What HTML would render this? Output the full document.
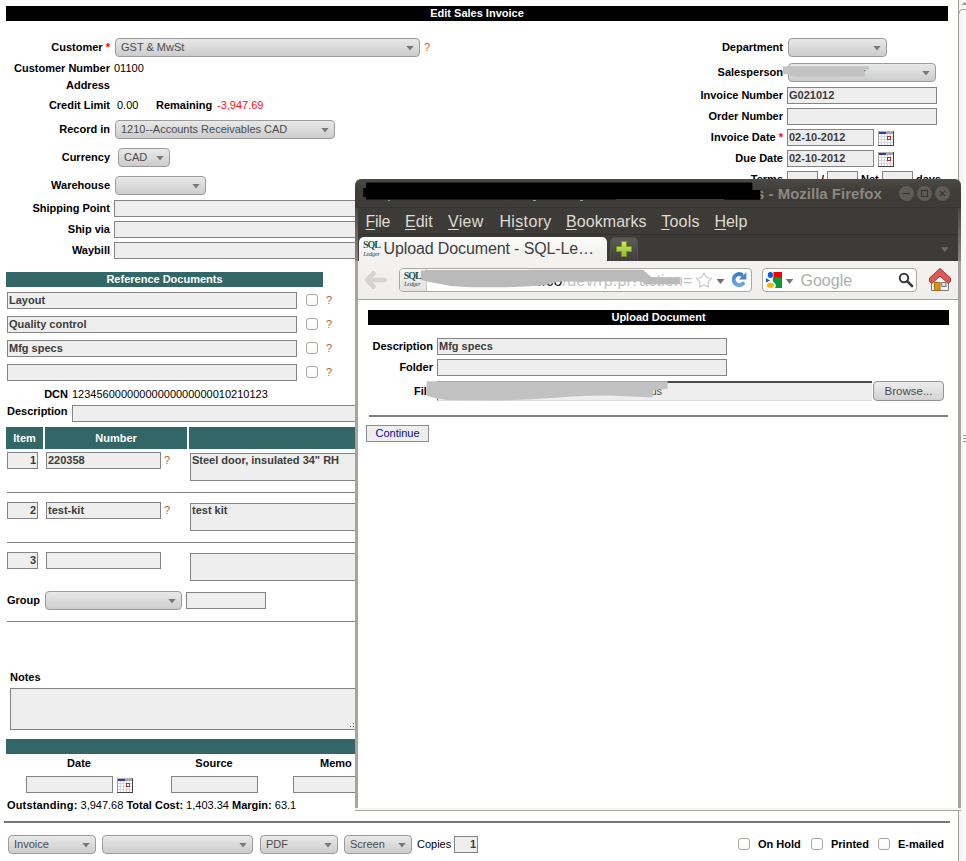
<!DOCTYPE html>
<html><head><meta charset="utf-8"><title>Edit Sales Invoice</title>
<style>
html,body{margin:0;padding:0;background:#fff;}
body{width:966px;height:861px;position:relative;overflow:hidden;font-family:"Liberation Sans",sans-serif;font-size:11px;color:#000;}
.a{position:absolute;box-sizing:content-box;}
.t{position:absolute;white-space:nowrap;font-size:11px;line-height:13px;}
.band{color:#fff;font-weight:bold;text-align:center;font-size:11px;white-space:nowrap;overflow:hidden;}
.in{position:absolute;background:#eee;border:1px solid #848484;font-weight:bold;font-size:11px;line-height:15px;color:#3c3c3c;padding:0 1px 0 1px;white-space:nowrap;overflow:hidden;box-sizing:content-box;}
.sel{position:absolute;border:1px solid #9b9b9b;border-radius:4px;background:linear-gradient(#e9e9e9,#cccccc);font-size:11px;color:#4c4c4c;text-indent:5px;white-space:nowrap;overflow:hidden;box-sizing:content-box;}
.sel i{position:absolute;right:5px;top:50%;margin-top:-2px;width:8px;height:5px;background:#787878;clip-path:polygon(0 0,100% 0,50% 100%);}
.chk{position:absolute;width:10px;height:10px;border:1px solid #a9a59e;border-radius:3px;background:linear-gradient(#fff,#fafafa);box-sizing:content-box;}

u{text-underline-offset:2px;text-decoration-thickness:1px;}
</style></head><body>
<div class="a band" style="left:6px;top:6px;width:942px;height:15px;line-height:15px;background:#000">Edit Sales Invoice</div>
<div class="t" style="right:856px;top:41px;font-weight:bold;">Customer <span style="color:#f00">*</span></div>
<div class="sel" style="left:115px;top:38px;width:303px;height:17px;line-height:17px">GST &amp; MwSt<i></i></div>
<div class="t" style="left:424px;top:41px;color:#b5633a;">?</div>
<div class="t" style="right:856px;top:62px;font-weight:bold;">Customer Number</div>
<div class="t" style="left:114px;top:62px;">01100</div>
<div class="t" style="right:856px;top:79px;font-weight:bold;">Address</div>
<div class="t" style="right:856px;top:99px;font-weight:bold;">Credit Limit</div>
<div class="t" style="left:117px;top:99px;">0.00</div>
<div class="t" style="left:156px;top:99px;font-weight:bold;">Remaining</div>
<div class="t" style="left:217px;top:99px;color:#ff1010;">-3,947.69</div>
<div class="t" style="right:856px;top:123px;font-weight:bold;">Record in</div>
<div class="sel" style="left:115px;top:120px;width:218px;height:17px;line-height:17px">1210--Accounts Receivables CAD<i></i></div>
<div class="t" style="right:856px;top:151px;font-weight:bold;">Currency</div>
<div class="sel" style="left:118px;top:148px;width:50px;height:17px;line-height:17px">CAD<i></i></div>
<div class="t" style="right:856px;top:179px;font-weight:bold;">Warehouse</div>
<div class="sel" style="left:115px;top:176px;width:89px;height:17px;line-height:17px"><i></i></div>
<div class="t" style="right:856px;top:202px;font-weight:bold;">Shipping Point</div>
<div class="in" style="left:114px;top:200px;width:296px;height:15px;"></div>
<div class="t" style="right:856px;top:223px;font-weight:bold;">Ship via</div>
<div class="in" style="left:114px;top:221px;width:296px;height:15px;"></div>
<div class="t" style="right:856px;top:244px;font-weight:bold;">Waybill</div>
<div class="in" style="left:114px;top:242px;width:296px;height:15px;"></div>
<div class="t" style="right:183px;top:41px;font-weight:bold;">Department</div>
<div class="sel" style="left:788px;top:38px;width:97px;height:17px;line-height:17px"><i></i></div>
<div class="t" style="right:183px;top:66px;font-weight:bold;">Salesperson</div>
<div class="sel" style="left:788px;top:63px;width:146px;height:17px;line-height:17px"><i></i></div>
<div class="t" style="left:862.3px;top:66px;color:#667;">r</div>
<svg class="a" style="left:780px;top:62px" width="92" height="18" viewBox="780 62 92 18"><path d="M783 66.2H869V69.6H864V76.4L797 76.9L790 76.2V74.2H783z" fill="#c3c3c3"/></svg>
<div class="t" style="right:183px;top:89px;font-weight:bold;">Invoice Number</div>
<div class="in" style="left:787px;top:87px;width:146px;height:15px;">G021012</div>
<div class="t" style="right:183px;top:110px;font-weight:bold;">Order Number</div>
<div class="in" style="left:787px;top:108px;width:146px;height:15px;"></div>
<div class="t" style="right:183px;top:131px;font-weight:bold;">Invoice Date <span style="color:#f00">*</span></div>
<div class="in" style="left:787px;top:129px;width:83px;height:15px;">02-10-2012</div>
<svg class="a" style="left:878px;top:131px" width="16" height="15" viewBox="0 0 16 15"><rect x="0" y="0" width="16" height="15" fill="#d6d6de"/><g fill="#fff"><rect x="1" y="3" width="2" height="2"/><rect x="1" y="6" width="2" height="2"/><rect x="1" y="9" width="2" height="2"/><rect x="1" y="12" width="2" height="2"/><rect x="4" y="3" width="2" height="2"/><rect x="4" y="6" width="2" height="2"/><rect x="4" y="9" width="2" height="2"/><rect x="4" y="12" width="2" height="2"/><rect x="7" y="3" width="2" height="2"/><rect x="7" y="6" width="2" height="2"/><rect x="7" y="9" width="2" height="2"/><rect x="7" y="12" width="2" height="2"/><rect x="10" y="3" width="2" height="2"/><rect x="10" y="6" width="2" height="2"/><rect x="10" y="9" width="2" height="2"/><rect x="10" y="12" width="2" height="2"/><rect x="13" y="3" width="2" height="2"/><rect x="13" y="6" width="2" height="2"/><rect x="13" y="9" width="2" height="2"/><rect x="13" y="12" width="2" height="2"/></g><rect x="0" y="0" width="16" height="1" fill="#b4b4b4"/><rect x="1" y="1" width="7" height="2" fill="#3838a8"/><rect x="8" y="1" width="7" height="2" fill="#a6a6a6"/><rect x="0" y="0" width="1" height="15" fill="#a2a2a2"/><rect x="15" y="0" width="1" height="15" fill="#444"/><rect x="0" y="14" width="16" height="1" fill="#444"/><rect x="9.5" y="5.5" width="3" height="3" fill="#fff" stroke="#b03434" stroke-width="1"/></svg>
<div class="t" style="right:183px;top:152px;font-weight:bold;">Due Date</div>
<div class="in" style="left:787px;top:150px;width:83px;height:15px;">02-10-2012</div>
<svg class="a" style="left:878px;top:152px" width="16" height="15" viewBox="0 0 16 15"><rect x="0" y="0" width="16" height="15" fill="#d6d6de"/><g fill="#fff"><rect x="1" y="3" width="2" height="2"/><rect x="1" y="6" width="2" height="2"/><rect x="1" y="9" width="2" height="2"/><rect x="1" y="12" width="2" height="2"/><rect x="4" y="3" width="2" height="2"/><rect x="4" y="6" width="2" height="2"/><rect x="4" y="9" width="2" height="2"/><rect x="4" y="12" width="2" height="2"/><rect x="7" y="3" width="2" height="2"/><rect x="7" y="6" width="2" height="2"/><rect x="7" y="9" width="2" height="2"/><rect x="7" y="12" width="2" height="2"/><rect x="10" y="3" width="2" height="2"/><rect x="10" y="6" width="2" height="2"/><rect x="10" y="9" width="2" height="2"/><rect x="10" y="12" width="2" height="2"/><rect x="13" y="3" width="2" height="2"/><rect x="13" y="6" width="2" height="2"/><rect x="13" y="9" width="2" height="2"/><rect x="13" y="12" width="2" height="2"/></g><rect x="0" y="0" width="16" height="1" fill="#b4b4b4"/><rect x="1" y="1" width="7" height="2" fill="#3838a8"/><rect x="8" y="1" width="7" height="2" fill="#a6a6a6"/><rect x="0" y="0" width="1" height="15" fill="#a2a2a2"/><rect x="15" y="0" width="1" height="15" fill="#444"/><rect x="0" y="14" width="16" height="1" fill="#444"/><rect x="9.5" y="5.5" width="3" height="3" fill="#fff" stroke="#b03434" stroke-width="1"/></svg>
<div class="t" style="right:183px;top:173px;font-weight:bold;">Terms</div>
<div class="in" style="left:787px;top:171px;width:27px;height:15px;"></div>
<div class="t" style="left:821px;top:173px;font-weight:bold;">/</div>
<div class="in" style="left:827px;top:171px;width:27px;height:15px;"></div>
<div class="t" style="left:861px;top:173px;font-weight:bold;">Net</div>
<div class="in" style="left:882px;top:171px;width:27px;height:15px;"></div>
<div class="t" style="left:916px;top:173px;font-weight:bold;">days</div>
<div class="a band" style="left:6px;top:272px;width:317px;height:15px;line-height:15px;background:#336666">Reference Documents</div>
<div class="in" style="left:7px;top:292px;width:286px;height:15px;">Layout</div>
<div class="chk" style="left:306px;top:294px"></div>
<div class="t" style="left:326px;top:294px;color:#b5633a;">?</div>
<div class="in" style="left:7px;top:316px;width:286px;height:15px;">Quality control</div>
<div class="chk" style="left:306px;top:318px"></div>
<div class="t" style="left:326px;top:318px;color:#b5633a;">?</div>
<div class="in" style="left:7px;top:340px;width:286px;height:15px;">Mfg specs</div>
<div class="chk" style="left:306px;top:342px"></div>
<div class="t" style="left:326px;top:342px;color:#b5633a;">?</div>
<div class="in" style="left:7px;top:364px;width:286px;height:15px;"></div>
<div class="chk" style="left:306px;top:366px"></div>
<div class="t" style="left:326px;top:366px;color:#b5633a;">?</div>
<div class="t" style="right:898px;top:388px;font-weight:bold;">DCN</div>
<div class="t" style="left:72px;top:388px;">12345600000000000000000010210123</div>
<div class="t" style="left:7px;top:405px;font-weight:bold;">Description</div>
<div class="in" style="left:72px;top:405px;width:296px;height:15px;"></div>
<div class="a band" style="left:6px;top:427px;width:37px;height:22px;line-height:22px;background:#336666">Item</div>
<div class="a band" style="left:45px;top:427px;width:142px;height:22px;line-height:22px;background:#336666">Number</div>
<div class="a band" style="left:189px;top:427px;width:200px;height:22px;line-height:22px;background:#336666"></div>
<div class="in" style="left:7px;top:452px;width:27px;height:15px;text-align:right;">1</div>
<div class="in" style="left:46px;top:452px;width:111px;height:15px;">220358</div>
<div class="t" style="left:164px;top:454px;color:#b5633a;">?</div>
<div class="in" style="left:190px;top:453px;width:196px;height:26px;line-height:13px;">Steel door, insulated 34&quot; RH</div>
<div class="a" style="left:7px;top:492px;width:360px;height:1px;background:#808080;"></div>
<div class="in" style="left:7px;top:502px;width:27px;height:15px;text-align:right;">2</div>
<div class="in" style="left:46px;top:502px;width:111px;height:15px;">test-kit</div>
<div class="t" style="left:164px;top:504px;color:#b5633a;">?</div>
<div class="in" style="left:190px;top:503px;width:196px;height:26px;line-height:13px;">test kit</div>
<div class="a" style="left:7px;top:542px;width:360px;height:1px;background:#808080;"></div>
<div class="in" style="left:7px;top:552px;width:27px;height:15px;text-align:right;">3</div>
<div class="in" style="left:46px;top:552px;width:111px;height:15px;"></div>
<div class="in" style="left:190px;top:553px;width:196px;height:26px;line-height:13px;"></div>
<div class="t" style="left:7px;top:594px;font-weight:bold;">Group</div>
<div class="sel" style="left:45px;top:591px;width:135px;height:17px;line-height:17px"><i></i></div>
<div class="in" style="left:186px;top:592px;width:76px;height:15px;"></div>
<div class="a" style="left:7px;top:621px;width:360px;height:1px;background:#808080;"></div>
<div class="t" style="left:10px;top:671px;font-weight:bold;">Notes</div>
<div class="in" style="left:10px;top:688px;width:356px;height:40px;"></div>
<div class="a" style="left:353px;top:723px;width:1px;height:1px;background:#666;"></div>
<div class="a" style="left:350px;top:726px;width:1px;height:1px;background:#666;"></div>
<div class="a" style="left:353px;top:726px;width:1px;height:1px;background:#666;"></div>
<div class="a" style="left:6px;top:739px;width:360px;height:15px;background:#336666;"></div>
<div class="t" style="left:79px;top:757px;font-weight:bold;transform:translateX(-50%);">Date</div>
<div class="t" style="left:214px;top:757px;font-weight:bold;transform:translateX(-50%);">Source</div>
<div class="t" style="left:320px;top:757px;font-weight:bold;">Memo</div>
<div class="in" style="left:26px;top:776px;width:83px;height:15px;"></div>
<svg class="a" style="left:117px;top:778px" width="16" height="15" viewBox="0 0 16 15"><rect x="0" y="0" width="16" height="15" fill="#d6d6de"/><g fill="#fff"><rect x="1" y="3" width="2" height="2"/><rect x="1" y="6" width="2" height="2"/><rect x="1" y="9" width="2" height="2"/><rect x="1" y="12" width="2" height="2"/><rect x="4" y="3" width="2" height="2"/><rect x="4" y="6" width="2" height="2"/><rect x="4" y="9" width="2" height="2"/><rect x="4" y="12" width="2" height="2"/><rect x="7" y="3" width="2" height="2"/><rect x="7" y="6" width="2" height="2"/><rect x="7" y="9" width="2" height="2"/><rect x="7" y="12" width="2" height="2"/><rect x="10" y="3" width="2" height="2"/><rect x="10" y="6" width="2" height="2"/><rect x="10" y="9" width="2" height="2"/><rect x="10" y="12" width="2" height="2"/><rect x="13" y="3" width="2" height="2"/><rect x="13" y="6" width="2" height="2"/><rect x="13" y="9" width="2" height="2"/><rect x="13" y="12" width="2" height="2"/></g><rect x="0" y="0" width="16" height="1" fill="#b4b4b4"/><rect x="1" y="1" width="7" height="2" fill="#3838a8"/><rect x="8" y="1" width="7" height="2" fill="#a6a6a6"/><rect x="0" y="0" width="1" height="15" fill="#a2a2a2"/><rect x="15" y="0" width="1" height="15" fill="#444"/><rect x="0" y="14" width="16" height="1" fill="#444"/><rect x="9.5" y="5.5" width="3" height="3" fill="#fff" stroke="#b03434" stroke-width="1"/></svg>
<div class="in" style="left:171px;top:776px;width:83px;height:15px;"></div>
<div class="in" style="left:293px;top:776px;width:83px;height:15px;"></div>
<div class="t" style="left:7px;top:799px;"><b style="letter-spacing:0.17px">Outstanding:</b> 3,947.68 <b>Total Cost:</b> 1,403.34 <b>Margin:</b> 63.1</div>
<div class="a" style="left:4px;top:821px;width:946px;height:2px;background:#777;"></div>
<div class="sel" style="left:8px;top:835px;width:86px;height:17px;line-height:17px">Invoice<i></i></div>
<div class="sel" style="left:102px;top:835px;width:149px;height:17px;line-height:17px"><i></i></div>
<div class="sel" style="left:260px;top:835px;width:76px;height:17px;line-height:17px">PDF<i></i></div>
<div class="sel" style="left:344px;top:835px;width:66px;height:17px;line-height:17px">Screen<i></i></div>
<div class="t" style="left:417px;top:838px;">Copies</div>
<div class="in" style="left:454px;top:836px;width:20px;height:15px;text-align:right;">1</div>
<div class="chk" style="left:738px;top:838px"></div>
<div class="t" style="left:758px;top:838px;font-weight:bold;">On Hold</div>
<div class="chk" style="left:811px;top:838px"></div>
<div class="t" style="left:831px;top:838px;font-weight:bold;">Printed</div>
<div class="chk" style="left:878px;top:838px"></div>
<div class="t" style="left:898px;top:838px;font-weight:bold;">E-mailed</div>
<svg class="a" style="left:958px;top:0" width="8" height="861" viewBox="958 0 8 861"><defs><linearGradient id="sg" x1="0" y1="0" x2="1" y2="0"><stop offset="0" stop-color="#f1f0ef"/><stop offset="1" stop-color="#fbfbfb"/></linearGradient></defs><rect x="958" y="0" width="8" height="861" fill="url(#sg)"/><rect x="958" y="0" width="1" height="861" fill="#a19d97"/><path d="M959 14Q959 9.5 963.5 9.5H966" fill="none" stroke="#a19d97" stroke-width="1"/><path d="M961.7 5L964.6 2L967.5 5z" fill="#9a9791"/><rect x="963" y="435" width="3" height="1" fill="#9c9892"/><rect x="963" y="438" width="3" height="1" fill="#9c9892"/><rect x="963" y="441" width="3" height="1" fill="#9c9892"/></svg>
<div class="a" style="left:355px;top:179px;width:606px;height:29px;background:linear-gradient(#4b4a44,#3e3d38 40%,#3c3b37);border-radius:6px 6px 0 0;"></div>
<div class="a" style="left:355px;top:208px;width:606px;height:53px;background:#3c3b37;"></div>
<div class="a" style="left:355px;top:234px;width:606px;height:1px;background:#33322e;"></div>
<div class="a" style="left:355px;top:207px;width:606px;height:1px;background:#35342f;"></div>
<div class="a" style="left:355px;top:261px;width:3px;height:547px;background:#a8a49d;"></div>
<div class="a" style="left:958px;top:261px;width:3px;height:547px;background:#a8a49d;"></div>
<div class="a" style="left:355px;top:208px;width:3px;height:53px;background:linear-gradient(#4a4943,#8a8780);"></div>
<div class="a" style="left:958px;top:208px;width:3px;height:53px;background:linear-gradient(#4a4943,#8a8780);"></div>
<div class="a" style="left:355px;top:808px;width:606px;height:2px;background:#f4f3f1;"></div>
<div class="a" style="left:355px;top:810px;width:606px;height:1px;background:#aaa69f;"></div>
<div class="t" style="left:756px;top:185px;font-weight:bold;color:#8b887e;font-size:15px;line-height:18px;">s - Mozilla Firefox</div>
<svg class="a" style="left:360px;top:180px" width="405" height="24" viewBox="360 180 405 24"><path d="M366 182.5H752.4V190H760.3V199.7H724V199.1H616V199.6H366V197H363.3V188H366z" fill="#000"/></svg>
<div class="a" style="left:388px;top:200px;width:2px;height:1px;background:#8f8f8f;"></div>
<div class="a" style="left:533px;top:200px;width:3px;height:1px;background:#9a9a9a;"></div>
<div class="a" style="left:580px;top:200px;width:3px;height:1px;background:#9a9a9a;"></div>
<svg class="a" style="left:899px;top:186px" width="16" height="16" viewBox="0 0 16 16"><circle cx="7.5" cy="7.5" r="7.5" fill="#5d5b54"/><g stroke="#35342f" stroke-width="1.15" fill="none"><path d="M4 7.5h7"/></g></svg>
<svg class="a" style="left:917px;top:186px" width="16" height="16" viewBox="0 0 16 16"><circle cx="7.5" cy="7.5" r="7.5" fill="#5d5b54"/><g stroke="#35342f" stroke-width="1.15" fill="none"><rect x="4.5" y="4.5" width="6" height="6"/></g></svg>
<svg class="a" style="left:935px;top:186px" width="16" height="16" viewBox="0 0 16 16"><circle cx="7.5" cy="7.5" r="7.5" fill="#5d5b54"/><g stroke="#35342f" stroke-width="1.15" fill="none"><path d="M4.9 4.9l5.3 5.3M10.2 4.9l-5.3 5.3"/></g></svg>
<div class="t" style="left:365.5px;top:212px;color:#dfdbd2;font-size:16px;line-height:20px;letter-spacing:-0.30px;"><u>F</u>ile</div>
<div class="t" style="left:405px;top:212px;color:#dfdbd2;font-size:16px;line-height:20px;letter-spacing:0.00px;"><u>E</u>dit</div>
<div class="t" style="left:448px;top:212px;color:#dfdbd2;font-size:16px;line-height:20px;letter-spacing:0.30px;"><u>V</u>iew</div>
<div class="t" style="left:499.4px;top:212px;color:#dfdbd2;font-size:16px;line-height:20px;letter-spacing:0.36px;">Hi<u>s</u>tory</div>
<div class="t" style="left:566px;top:212px;color:#dfdbd2;font-size:16px;line-height:20px;letter-spacing:0.07px;"><u>B</u>ookmarks</div>
<div class="t" style="left:661.3px;top:212px;color:#dfdbd2;font-size:16px;line-height:20px;letter-spacing:0.18px;"><u>T</u>ools</div>
<div class="t" style="left:714.4px;top:212px;color:#dfdbd2;font-size:16px;line-height:20px;letter-spacing:0.00px;"><u>H</u>elp</div>
<div class="a" style="left:359px;top:237px;width:248px;height:24px;background:linear-gradient(#fcfcfc,#f3f2f1 70%);border-radius:5px 5px 0 0;"></div>
<div class="a" style="left:610px;top:237px;width:26px;height:23px;background:linear-gradient(#5b5a55,#403f3b);border:1px solid #504f4a;border-bottom:none;border-radius:5px 5px 0 0;"></div>
<svg class="a" style="left:616px;top:241px" width="16" height="16" viewBox="0 0 16 16"><defs><linearGradient id="pg" x1="0" y1="0" x2="0" y2="1"><stop offset="0" stop-color="#cfe26a"/><stop offset="1" stop-color="#96bd2c"/></linearGradient></defs><path d="M5.5 .5h5v5h5v5h-5v5h-5v-5h-5v-5h5z" fill="url(#pg)" stroke="#6f9a1d" stroke-width="1"/></svg>
<div class="a" style="left:941px;top:247.3px;width:7.6px;height:4.8px;background:#6e6c66;clip-path:polygon(0 0,100% 0,50% 100%);"></div>
<div class="a" style="left:363px;top:241.4px;width:18px;height:16px;font-family:'Liberation Serif',serif;color:#1a5250;white-space:nowrap;opacity:0.99;"><div style="position:absolute;left:0;top:-1.4px;font-size:10px;line-height:10px;letter-spacing:-1.1px;font-weight:bold;">SQL</div><div style="position:absolute;left:0.3px;top:8.3px;font-size:6.5px;line-height:7px;font-style:italic;letter-spacing:-0.35px;">Ledger</div></div>
<div class="t" style="left:383.5px;top:239px;color:#3e3e3e;font-size:16px;line-height:20px;letter-spacing:-0.12px;">Upload Document - SQL-Le…</div>
<div class="a" style="left:358px;top:261px;width:600px;height:38px;background:linear-gradient(#f3f2f1,#efeeed);"></div>
<div class="a" style="left:358px;top:299px;width:600px;height:1px;background:#a3a099;"></div>
<svg class="a" style="left:364px;top:270px" width="24" height="20" viewBox="0 0 24 20"><path d="M9.5 3.5L3 10L9.5 16.5M4 10H20.5" fill="none" stroke="#d6d4d1" stroke-width="4.6" stroke-linecap="round" stroke-linejoin="round"/></svg>
<div class="a" style="left:399px;top:268px;width:351px;height:22px;background:#fff;border:1px solid #aba8a1;border-radius:4px;"></div>
<div class="a" style="left:400px;top:269px;width:26px;height:22px;background:linear-gradient(#f6f6f5,#e4e3e1);border-right:1px solid #c8c6c1;border-radius:3px 0 0 3px;"></div>
<div class="a" style="left:403.8px;top:272px;width:18px;height:16px;font-family:'Liberation Serif',serif;color:#1a5250;white-space:nowrap;opacity:0.99;"><div style="position:absolute;left:0;top:-1.4px;font-size:10px;line-height:10px;letter-spacing:-1.1px;font-weight:bold;">SQL</div><div style="position:absolute;left:0.3px;top:8.3px;font-size:6.5px;line-height:7px;font-style:italic;letter-spacing:-0.35px;">Ledger</div></div>
<div class="t" style="right:273.5px;top:271px;color:#c2c2c2;font-size:16px;line-height:20px;letter-spacing:0.17px;"><span style="color:#222">.ico</span>/dev/rp.pl?action=</div>
<svg class="a" style="left:415px;top:262px" width="290" height="32" viewBox="415 262 290 32"><path d="M421 270.5L430 270L525 270L532 269.8L643 269.8L651.5 277.2L679.8 277.2L680 284.3L644.5 284.3L642 281.5L562 281.5L552 283L545 285.3L530 286.2L507 287.3L469 287.3L451 286L432 282.5L421 280z" fill="#bababa"/></svg>
<svg class="a" style="left:695px;top:271px" width="18" height="18" viewBox="0 0 18 18"><path d="M9.0 1.8L11.4 6.4L16.5 7.3L12.9 11.0L13.6 16.1L9.0 13.8L4.4 16.1L5.1 11.0L1.5 7.3L6.6 6.4z" fill="#fff" stroke="#d0d0d0" stroke-width="1.3" stroke-linejoin="round"/></svg>
<div class="a" style="left:716.5px;top:279px;width:8px;height:5px;background:#6e6e6e;clip-path:polygon(0 0,100% 0,50% 100%);"></div>
<svg class="a" style="left:730px;top:271px" width="18" height="18" viewBox="0 0 18 18"><defs><linearGradient id="rg" x1="0" y1="0" x2="0" y2="1"><stop offset="0" stop-color="#3f7fc8"/><stop offset="1" stop-color="#6fa8e0"/></linearGradient></defs><path d="M13 12.6A5.5 5.5 0 1 1 11.4 3.6" fill="none" stroke="url(#rg)" stroke-width="4" stroke-linecap="round"/><path d="M16.3 1.2V8.6H8.9z" fill="#4685cc"/></svg>
<div class="a" style="left:762px;top:268px;width:153px;height:22px;background:#fff;border:1px solid #aba8a1;border-radius:4px;"></div>
<svg class="a" style="left:766px;top:272px" width="16" height="16" viewBox="0 0 16 16"><rect x="7.5" y="0" width="8.5" height="6" fill="#f00000"/><path d="M7 5.5Q10 4.5 16 6V16H9Q11 13 8.5 11Q6 9 7 5.5z" fill="#0a9a3c"/><ellipse cx="4.4" cy="3" rx="2.6" ry="3" fill="#0a5ad2"/><path d="M0 6.2L4 8.6L0 10.6z" fill="#1250b8"/><ellipse cx="4.4" cy="13.3" rx="3.6" ry="2.6" fill="#f7b90c"/></svg>
<div class="a" style="left:785.7px;top:279px;width:7.8px;height:5px;background:#787878;clip-path:polygon(0 0,100% 0,50% 100%);"></div>
<div class="t" style="left:800.5px;top:271px;color:#aeaeae;font-size:16px;line-height:20px;">Google</div>
<svg class="a" style="left:897px;top:271px" width="18" height="18" viewBox="0 0 18 18"><circle cx="7" cy="7" r="4.2" fill="none" stroke="#3a3a3a" stroke-width="2"/><path d="M10.2 10.2L15 15" stroke="#3a3a3a" stroke-width="2.6" stroke-linecap="round"/></svg>
<svg class="a" style="left:928px;top:267px" width="24" height="25" viewBox="928 267 24 25"><path d="M931.5 290.5V280L940 273.5L948.5 280V290.5z" fill="#f1f1f0" stroke="#7c7c7c" stroke-width="1"/><rect x="934.5" y="282.5" width="5.5" height="8" fill="#d8921e" stroke="#a66c0c" stroke-width="1"/><rect x="941.7" y="282.5" width="4.3" height="4" fill="#cfe2e8" stroke="#7a7a7a" stroke-width="1"/><path d="M929.5 281.5V278L940 268.5L950.5 278V281.5L948 283.3L940 276L932 283.3z" fill="#db5853" stroke="#a93030" stroke-width="1" stroke-linejoin="round"/></svg>
<div class="a" style="left:358px;top:300px;width:600px;height:508px;background:#fff;"></div>
<div class="a band" style="left:368px;top:310px;width:581px;height:15px;line-height:15px;background:#000">Upload Document</div>
<div class="t" style="right:533px;top:340px;font-weight:bold;">Description</div>
<div class="in" style="left:437px;top:338px;width:286px;height:15px;">Mfg specs</div>
<div class="t" style="right:533px;top:361px;font-weight:bold;">Folder</div>
<div class="in" style="left:437px;top:359px;width:286px;height:15px;"></div>
<div class="t" style="right:533px;top:385px;font-weight:bold;">File</div>
<div class="a" style="left:437px;top:381px;width:434px;height:17px;background:#eee;border-top:2px solid #4a4a4a;border-left:1px solid #777;border-bottom:1px solid #ddd;"></div>
<div class="t" style="left:650.5px;top:385px;color:#4a4a4a;">us</div>
<svg class="a" style="left:420px;top:378px" width="255" height="26" viewBox="420 378 255 26"><path d="M426.6 381.2H667.6V388.8L653 390.2L652.5 397.5L608 395.5L581 396L555 397.7L528 399.6L500 400.4L447 399.9L436 398.3L426.6 396z" fill="#c2c2c2"/></svg>
<div class="a" style="left:873px;top:381px;width:69px;height:18px;line-height:18px;border:1px solid #939393;border-radius:4px;background:linear-gradient(#ededed,#d2d2d2);font-size:11.5px;color:#4c4c4c;text-align:center;">Browse...</div>
<div class="a" style="left:369px;top:415px;width:579px;height:2px;background:#808080;"></div>
<div class="a" style="left:366px;top:425px;width:61px;height:15px;line-height:15px;border:1px solid #8c8c8c;background:#eee;font-size:11px;color:#0c0c84;text-align:center;">Continue</div>
</body></html>
